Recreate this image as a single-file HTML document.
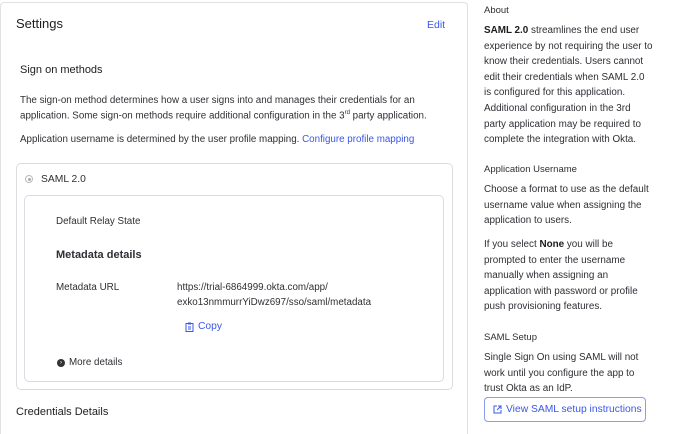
<!DOCTYPE html>
<html style="width:690px;height:434px;overflow:hidden"><head><style>
*{margin:0;padding:0;box-sizing:border-box}
body{width:690px;height:434px;overflow:hidden;background:#fff;font-family:"Liberation Sans",sans-serif;color:#1d1d21;position:relative}
.a{position:absolute;white-space:nowrap}
.card{position:absolute;left:0;top:2px;width:468px;height:432px;border:1px solid #e1e1e3;border-bottom:none;border-radius:4px 4px 0 0;background:#fff}
.box{position:absolute;border:1px solid #dcdce0;border-radius:5px}
.t{font-size:9.8px;color:#2f2f35}
.b{color:#3a57e8}
.r{position:absolute;left:484px;font-size:9.9px;line-height:15.6px;color:#2f2f35;width:180px}
</style></head><body>
<div class="card"></div>
<div class="a" style="left:16px;top:16px;font-size:13px">Settings</div>
<div class="a b" style="left:427px;top:19px;font-size:10.5px">Edit</div>
<div class="a" style="left:20px;top:64px;font-size:11px">Sign on methods</div>
<div class="a t" style="left:20px;top:95px">The sign-on method determines how a user signs into and manages their credentials for an</div>
<div class="a t" style="left:20px;top:110px">application. Some sign-on methods require additional configuration in the 3<sup style="font-size:6px">rd</sup> party application.</div>
<div class="a t" style="left:20px;top:134px">Application username is determined by the user profile mapping. <span class="b">Configure profile mapping</span></div>
<div class="box" style="left:16px;top:163px;width:437px;height:227px"></div>
<div class="a" style="left:25px;top:175px;width:8px;height:8px;border-radius:50%;border:1px solid #bbb"><div style="position:absolute;left:1.5px;top:1.5px;width:3px;height:3px;border-radius:50%;background:#aaa"></div></div>
<div class="a t" style="left:41px;top:174px;font-size:10.3px">SAML 2.0</div>
<div class="box" style="left:24px;top:195px;width:420px;height:187px"></div>
<div class="a t" style="left:56px;top:216px">Default Relay State</div>
<div class="a" style="left:56px;top:249px;font-size:11px;font-weight:bold;color:#2f2f35">Metadata details</div>
<div class="a t" style="left:56px;top:282px">Metadata URL</div>
<div class="a t" style="left:177px;top:282px">https://trial-6864999.okta.com/app/</div>
<div class="a t" style="left:177px;top:297px">exko13nmmurrYiDwz697/sso/saml/metadata</div>
<svg class="a" style="left:185px;top:322px" width="9" height="10" viewBox="0 0 9 10"><rect x="1" y="1.5" width="7" height="8" fill="none" stroke="#3a57e8"/><rect x="3" y="0.5" width="3" height="2" fill="#3a57e8"/><path d="M3 5h3M3 7h3" stroke="#3a57e8"/></svg>
<div class="a b" style="left:198px;top:321px;font-size:10.3px">Copy</div>
<div class="a" style="left:57px;top:359px;width:8px;height:8px;border-radius:50%;background:#333;color:#fff;font-size:6px;line-height:8px;text-align:center">›</div>
<div class="a t" style="left:69px;top:357px">More details</div>
<div class="a" style="left:16px;top:406px;font-size:11px">Credentials Details</div>

<div class="r" style="top:3px;font-size:9.5px">About</div>
<div class="r" style="top:23px"><b style="color:#1d1d21">SAML 2.0</b> streamlines the end user<br>experience by not requiring the user to<br>know their credentials. Users cannot<br>edit their credentials when SAML 2.0<br>is configured for this application.<br>Additional configuration in the 3rd<br>party application may be required to<br>complete the integration with Okta.</div>
<div class="r" style="top:162px;font-size:9.5px">Application Username</div>
<div class="r" style="top:182px">Choose a format to use as the default<br>username value when assigning the<br>application to users.</div>
<div class="r" style="top:237px">If you select <b style="color:#1d1d21">None</b> you will be<br>prompted to enter the username<br>manually when assigning an<br>application with password or profile<br>push provisioning features.</div>
<div class="r" style="top:330px;font-size:9.5px">SAML Setup</div>
<div class="r" style="top:350px">Single Sign On using SAML will not<br>work until you configure the app to<br>trust Okta as an IdP.</div>
<div class="a" style="left:484px;top:397px;width:162px;height:25px;border:1px solid #8b9cf0;border-radius:4px"></div>
<svg class="a" style="left:493px;top:405px" width="9" height="9" viewBox="0 0 9 9"><path d="M4 1H1v7h7V5M5 1h3v3M8 1L4 5" fill="none" stroke="#3a57e8"/></svg>
<div class="a b" style="left:506px;top:404px;font-size:10.3px">View SAML setup instructions</div>
</body></html>
